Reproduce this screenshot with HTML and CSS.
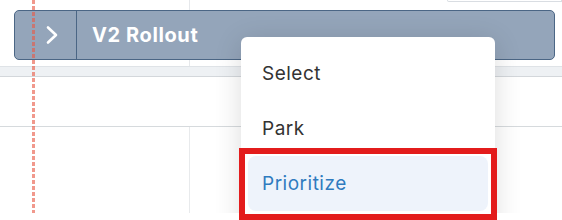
FILE: index.html
```html
<!DOCTYPE html>
<html lang="en">

<head>
    <meta charset="UTF-8">
    <title>Rollout board</title>
    <link rel="stylesheet" href="styles.css">
</head>

<body>
    <div class="board">
        <div class="lane-top">
            <div class="peek"></div>
            <div class="group-bar">
                <span class="toggle">
                    <svg width="16" height="20" viewBox="0 0 16 20">
                        <path d="M4 2.5 L12 10 L4 17.5" fill="none" stroke="#fff" stroke-width="2.6"
                            stroke-linecap="round" stroke-linejoin="round" />
                    </svg>
                </span>
                <span class="group-title">V2 Rollout</span>
            </div>
        </div>
        <div class="band"></div>
        <div class="row"></div>
        <div class="row row-grid"></div>

        <!-- today marker -->
        <div class="today"></div>

        <!-- context menu -->
        <ul class="menu">
            <li class="menu-item">Select</li>
            <li class="menu-item">Park</li>
            <li class="menu-item active">Prioritize</li>
        </ul>
    </div>

    <div class="highlight"></div>
</body>

</html>
```

FILE: styles.css
```css
body {
    margin: 0;
    background: #fff;
    font-family: Inter, "Open Sans", sans-serif;
}

.board {
    position: relative;
    height: 213px;
    overflow: hidden;
}

.lane-top {
    height: 66px;
    padding: 0 7px 0 14px;
    background: linear-gradient(to right, transparent 189px, #e6e8eb 189px, #e6e8eb 190px, transparent 190px);
}

.peek {
    height: 1px;
    margin-left: 433px;
    margin-right: -7px;
    border: 1px solid #d9dde2;
    border-top: none;
    border-radius: 0 0 0 6px;
}

.group-bar {
    margin-top: 8px;
    height: 48px;
    display: flex;
    align-items: center;
    background: #94a5ba;
    border: 1px solid #4b6685;
    border-radius: 5px;
}

.toggle {
    width: 49px;
    height: 100%;
    padding-left: 12px;
    display: flex;
    align-items: center;
    justify-content: center;
    border-right: 1px solid #4b6685;
}

.group-title {
    margin-left: 15px;
    color: #fff;
    font-size: 20px;
    font-weight: 700;
    letter-spacing: 0.6px;
}

.band {
    height: 9px;
    background: #eef1f4;
    border-top: 1px solid #dfe3e7;
    border-bottom: 1px solid #d3d7db;
}

.row {
    height: 49px;
    border-bottom: 1px solid #d6dadd;
}

.row-grid {
    height: 86px;
    border: none;
    background: linear-gradient(to right, transparent 189px, #e8eaec 189px, #e8eaec 190px, transparent 190px);
}

.today {
    position: absolute;
    left: 32px;
    top: 0;
    width: 3px;
    height: 213px;
    background: repeating-linear-gradient(to bottom, rgba(232, 90, 70, 0.62) 0 4px, transparent 4px 6px);
}

.menu {
    position: absolute;
    left: 241px;
    top: 37px;
    width: 254px;
    height: 200px;
    margin: 0;
    padding: 9px 7px;
    box-sizing: border-box;
    list-style: none;
    background: #fff;
    border-radius: 6px 6px 0 0;
    box-shadow: 0 4px 28px rgba(0, 0, 0, 0.14);
}

.menu-item {
    height: 55px;
    display: flex;
    align-items: center;
    padding-left: 14px;
    font-size: 19px;
    letter-spacing: 0.5px;
    color: #333;
    border-radius: 8px;
}

.menu-item.active {
    background: #eef3fb;
    color: #2f7bbf;
}

.highlight {
    position: absolute;
    left: 239px;
    top: 148px;
    width: 258px;
    height: 72px;
    box-sizing: border-box;
    border: 6px solid #e31c1c;
}
```
